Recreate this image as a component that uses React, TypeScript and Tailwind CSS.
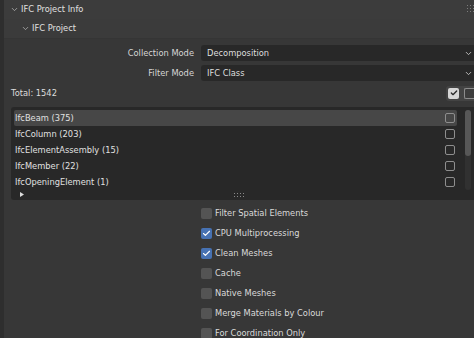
import { Check, ChevronDown } from 'lucide-react';

const rows = [
  'IfcBeam (375)',
  'IfcColumn (203)',
  'IfcElementAssembly (15)',
  'IfcMember (22)',
  'IfcOpeningElement (1)',
];

const options = [
  { label: 'Filter Spatial Elements', checked: false },
  { label: 'CPU Multiprocessing', checked: true },
  { label: 'Clean Meshes', checked: true },
  { label: 'Cache', checked: false },
  { label: 'Native Meshes', checked: false },
  { label: 'Merge Materials by Colour', checked: false },
  { label: 'For Coordination Only', checked: false },
];

const Grip = () => (
  <svg width="10" height="4" viewBox="0 0 10 4" className="text-[#8a8a8a]">
    {[0, 3, 6, 9].map((x) => (
      <g key={x} fill="currentColor">
        <rect x={x} y="0" width="1" height="1" />
        <rect x={x} y="3" width="1" height="1" />
      </g>
    ))}
  </svg>
);

const HeaderGrip = () => (
  <svg width="7" height="8" viewBox="0 0 7 8" className="text-[#7c7c7c]">
    {[0, 3, 6].map((y) =>
      [0, 3, 6].map((x) => (
        <rect key={`${x}-${y}`} x={x} y={y} width="1" height="1" fill="currentColor" />
      ))
    )}
  </svg>
);

const Dropdown = ({ label, value }: { label: string; value: string }) => (
  <div className="flex items-center h-[20px]">
    <div className="w-[197px] pr-[7px] text-right text-[#d6d6d6]">{label}</div>
    <div className="flex-1 h-[16px] bg-[#282828] rounded-l-[3px] flex items-center pl-[6px] pr-[1px] text-[#dedede]">
      <span className="flex-1">{value}</span>
      <ChevronDown size={9} strokeWidth={2.5} className="text-[#bdbdbd]" />
    </div>
  </div>
);

const App = () => {
  return (
    <div
      className="w-[474px] h-[338px] overflow-hidden flex bg-[#2b2b2b] text-[8.3px] leading-none"
      style={{ fontFamily: '"DejaVu Sans", sans-serif' }}
    >
      <div className="w-[4px] shrink-0 bg-[#2e2e2e]" />
      <div className="flex-1 bg-[#373737]">
        <div className="h-[19px] flex items-center pl-[6px] pr-[0px] bg-[#3c3c3c] text-[#e0e0e0]">
          <ChevronDown size={9} strokeWidth={2} className="text-[#b8b8b8]" />
          <span className="ml-[2px] flex-1">IFC Project Info</span>
          <div className="mb-[2px]">
            <HeaderGrip />
          </div>
        </div>
        <div className="h-[20px] flex items-center pl-[17px] bg-[#3b3b3b] text-[#e0e0e0] border-b border-[#353535]">
          <ChevronDown size={9} strokeWidth={2} className="text-[#b8b8b8]" />
          <span className="ml-[2px]">IFC Project</span>
        </div>
        <div className="pt-[4px]">
          <Dropdown label="Collection Mode" value="Decomposition" />
          <Dropdown label="Filter Mode" value="IFC Class" />
        </div>
        <div className="h-[20px] flex items-center pl-[7px] text-[#dcdcdc]">
          <span className="flex-1">Total: 1542</span>
          <div className="flex items-center gap-[5px] h-[15px] pl-[2px] bg-[#434343] rounded-l-[3px]">
            <div className="w-[11px] h-[11px] rounded-[2px] bg-[#d6d6d6] flex items-center justify-center">
              <Check size={8} strokeWidth={4} className="text-[#2a2a2a]" />
            </div>
            <div className="w-[10px] h-[11px] rounded-l-[2px] border border-r-0 border-[#8c8c8c] bg-[#3c3c3c]" />
          </div>
        </div>
        <div className="mt-[4px] ml-[7px] h-[93px] bg-[#282828] rounded-l-[3px] flex">
          <div className="flex-1 pt-[3px] pl-[3px]">
            {rows.map((r, i) => (
              <div
                key={r}
                className={`h-[16px] flex items-center pl-[1px] pr-[2px] rounded-[2px] text-[#e0e0e0] ${
                  i === 0 ? 'bg-[#474747]' : ''
                }`}
              >
                <span className="flex-1">{r}</span>
                <div className="w-[10px] h-[10px] rounded-[2px] border border-[#8e8e8e]" />
              </div>
            ))}
            <div className="h-[9px] flex items-center">
              <svg width="4" height="5" viewBox="0 0 4 5" className="ml-[6px] text-[#dcdcdc]">
                <path d="M0 0 L4 2.5 L0 5 Z" fill="currentColor" />
              </svg>
              <div className="flex-1 flex justify-center pr-[4px]">
                <Grip />
              </div>
            </div>
          </div>
          <div className="w-[6px] ml-[8px] mr-[3px] mt-[3px] h-[80px] bg-[#313131] rounded-[3px]">
            <div className="h-[46px] bg-[#575757] rounded-[3px]" />
          </div>
        </div>
        <div className="mt-[3px] pl-[197px]">
          {options.map((o) => (
            <div key={o.label} className="h-[20px] flex items-center text-[#dadada]">
              <div
                className={`w-[11px] h-[11px] rounded-[2px] flex items-center justify-center ${
                  o.checked ? 'bg-[#4772b3]' : 'bg-[#545454]'
                }`}
              >
                {o.checked && <Check size={9} strokeWidth={3} className="text-white" />}
              </div>
              <span className="ml-[3px]">{o.label}</span>
            </div>
          ))}
        </div>
      </div>
    </div>
  );
};

export default App;
